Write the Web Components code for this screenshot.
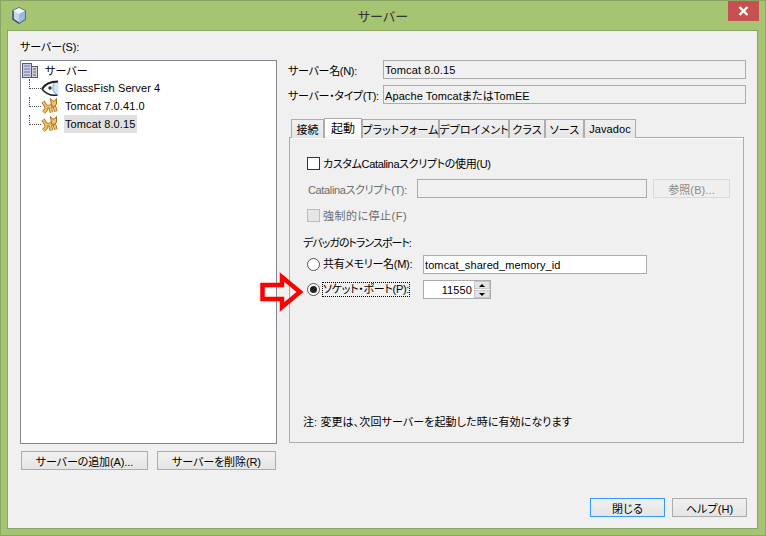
<!DOCTYPE html>
<html lang="ja">
<head>
<meta charset="utf-8">
<title>サーバー</title>
<style>
  html, body { margin: 0; padding: 0; background: #a6c573; }
  body {
    font: 11px "Liberation Sans", "Noto Sans CJK JP", sans-serif; color: #000;
    font-feature-settings: "palt"; letter-spacing: 0.1px;
  }
</style>
</head>
<body>
<server-dialog></server-dialog>

<script>
(function() {
  const catPath = 'M2 3.500L5 8.500L9 8.500L13.500 7M13 7.500L15 13.500M5 8.500L5.500 11L2.500 14.500M9 9L10.500 14.500';
  const ICONS = {
    server: `<svg width="16" height="16" viewBox="0 0 16 16"><rect x="0.5" y="1.5" width="9" height="14" fill="#c9cde6" stroke="#555a6e"/><rect x="9.5" y="4.5" width="6" height="11" fill="#d6d6d6" stroke="#555a6e"/><path d="M2 4h6M2 7h6M2 10h6M2 13h6" stroke="#6b70a8"/><path d="M11 7h3M11 10h3M11 13h3" stroke="#555"/></svg>`,
    fish: `<svg width="18" height="17" viewBox="0 0 18 17"><path d="M13 2.500C10 6 10.500 12 15 15.500C16.500 15.500 17 15 17.500 14.500V2z" fill="#cfe4f5"/><path d="M1 9C4 4 10 1.500 17 1.500" fill="none" stroke="#1c1c1c" stroke-width="1.800"/><path d="M1 9C5 14 11 16 16.500 15" fill="none" stroke="#1c1c1c" stroke-width="1.500"/><circle cx="9" cy="8" r="1.700" fill="#333"/><path d="M13 3C11 7 12 12 15 14" fill="none" stroke="#7fb0dc"/></svg>`,
    cat: `<svg width="17" height="17" viewBox="0 0 17 17"><path d="${catPath}" fill="none" stroke="#a5701f" stroke-width="3.600" stroke-linejoin="round"/><path d="${catPath}" fill="none" stroke="#f2c063" stroke-width="2" stroke-linejoin="round"/><path d="M9.500 .5L11.500 3h2L15.500 .5V6l-2 2.500-3-.5z" fill="#f2c063" stroke="#a5701f"/></svg>`
  };

  // plain gray push button
  class UiButton extends HTMLElement {
    constructor() {
      super();
      this.attachShadow({ mode: 'open' }).innerHTML = `
        <style>
          :host {
            display: flex; align-items: center; justify-content: center;
            box-sizing: border-box; height: 19px;
            border: 1px solid #acacac;
            background: linear-gradient(#f0f0f0, #e5e5e5);
            color: #000;
          }
          :host([focused]) { border-color: #3399ff; }
          :host([disabled]) { border-color: #d9d9d9; background: #efefef; color: #8a8a8a; }
        </style>
        <slot></slot>`;
    }
  }
  customElements.define('ui-button', UiButton);

  class UiField extends HTMLElement {
    constructor() {
      super();
      this.attachShadow({ mode: 'open' }).innerHTML = `
        <style>
          :host {
            display: flex; align-items: center;
            box-sizing: border-box; height: 19px; padding: 0 2px 0 1px;
            border: 1px solid #ababab; background: #f0f0f0; color: #000;
            white-space: nowrap;
          }
          :host([editable]) { background: #fff; }
        </style>
        <slot></slot>`;
    }
  }
  customElements.define('ui-field', UiField);

  class UiCheck extends HTMLElement {
    constructor() {
      super();
      this.attachShadow({ mode: 'open' }).innerHTML = `
        <style>
          :host { display: flex; align-items: center; gap: 3px; height: 14px; white-space: nowrap; }
          .box { width: 11px; height: 11px; border: 1px solid #333; background: #fff; flex: none; }
          :host([disabled]) { color: #6d6d6d; }
          :host([disabled]) .box { border-color: #bcbcbc; background: #e6e6e6; }
        </style>
        <span class="box"></span><slot></slot>`;
    }
  }
  customElements.define('ui-check', UiCheck);

  class UiRadio extends HTMLElement {
    constructor() {
      super();
      this.attachShadow({ mode: 'open' }).innerHTML = `
        <style>
          :host { display: flex; align-items: center; gap: 3px; white-space: nowrap; }
          .dot {
            width: 11px; height: 11px; border: 1px solid #555; border-radius: 50%; background: #fff;
            flex: none; display: flex; align-items: center; justify-content: center;
          }
          .dot i { width: 7px; height: 7px; border-radius: 50%; background: #222; display: none; }
          :host([checked]) .dot i { display: block; }
          .txt { line-height: 13px; }
          :host([focused]) .txt { outline: 1px dotted #000; }
        </style>
        <span class="dot"><i></i></span><span class="txt"><slot></slot></span>`;
    }
  }
  customElements.define('ui-radio', UiRadio);

  class UiSpinner extends HTMLElement {
    constructor() {
      super();
      this.attachShadow({ mode: 'open' }).innerHTML = `
        <style>
          :host {
            display: flex; box-sizing: border-box; height: 19px; width: 68px;
            border: 1px solid #ababab; background: #fff;
          }
          .val { flex: 1; display: flex; align-items: center; justify-content: flex-end; padding-right: 2px; }
          .btns { width: 16px; display: flex; flex-direction: column; gap: 1px; background: #fff; }
          .btns span {
            flex: 1; background: #e3e3e3; display: flex; align-items: center; justify-content: center;
            border: 1px solid #c9c9c9; box-sizing: border-box;
          }
          .up { width: 0; height: 0; border: 3px solid transparent; border-top: 0; border-bottom: 3px solid #000; }
          .dn { width: 0; height: 0; border: 3px solid transparent; border-bottom: 0; border-top: 3px solid #000; }
        </style>
        <span class="val"><slot></slot></span>
        <span class="btns"><span><i class="up"></i></span><span><i class="dn"></i></span></span>`;
    }
  }
  customElements.define('ui-spinner', UiSpinner);

  class TreeItem extends HTMLElement {
    constructor() {
      super();
      const root = this.hasAttribute('root');
      const icon = ICONS[this.getAttribute('icon')] || '';
      this.attachShadow({ mode: 'open' }).innerHTML = `
        <style>
          :host { display: flex; align-items: center; height: 18px; white-space: nowrap; }
          .conn {
            align-self: flex-start; width: 11px; height: 9px; margin-left: 8px; flex: none;
            border-left: 1px dotted #555; border-bottom: 1px dotted #555; box-sizing: content-box;
          }
          .ic { display: flex; flex: none; width: ${root ? 22 : 23}px; margin-left: ${root ? 1 : 0}px; }
          .txt { padding: 0 2px 0 1px; height: 18px; display: flex; align-items: center; }
          :host([selected]) .txt { background: #e0e0e0; }
        </style>
        ${root ? '' : '<span class="conn"></span>'}
        <span class="ic">${icon}</span><span class="txt"><slot></slot></span>`;
    }
  }
  customElements.define('tree-item', TreeItem);

  class TabStrip extends HTMLElement {
    constructor() {
      super();
      const names = ['接続', '起動', 'プラットフォーム', 'デプロイメント', 'クラス', 'ソース', 'Javadoc'];
      const widths = [33, 38, 77, 70, 36, 39, 52];
      this.attachShadow({ mode: 'open' }).innerHTML = `
        <style>
          :host { display: flex; align-items: flex-end; height: 20px; padding-left: 3px; position: relative; z-index: 1; margin-bottom: -1px; }
          .tab {
            box-sizing: border-box; height: 19px;
            display: flex; align-items: center; justify-content: center; white-space: nowrap;
            border: 1px solid #acacac; border-bottom: 0;
            background: linear-gradient(#f0f0f0, #e6e6e6);
          }
          .tab.on {
            height: 20px; background: linear-gradient(#fff, #fff 80%, #f0f0f0);
            padding-bottom: 2px; font-size: 12px;
          }
        </style>
        ${names.map((n, i) => `<span class="tab${i === 1 ? ' on' : ''}" style="width:${widths[i]}px">${n}</span>`).join('')}`;
    }
  }
  customElements.define('tab-strip', TabStrip);

  class ServerDialog extends HTMLElement {
    constructor() {
      super();
      this.attachShadow({ mode: 'open' }).innerHTML = `
        <style>
          :host {
            display: flex; flex-direction: column; box-sizing: border-box;
            width: 766px; height: 536px; position: relative; overflow: hidden;
            border: 1px solid #8aa565; background: #a6c573;
          }
          .title { height: 29px; display: flex; flex: none; position: relative; }
          .title .logo { margin: 6px 0 0 10px; }
          .title .cap { position: absolute; left: 0; right: 0; top: 5px; text-align: center; font-size: 13px; color: #333; }
          .title .close {
            position: absolute; right: 6px; top: 0; width: 31px; height: 20px; background: #c75050;
            display: flex; align-items: center; justify-content: center;
          }
          .body {
            margin: 0 7px 6px 6px; flex: 1; min-height: 0;
            border: 1px solid #8aa565; background: #f0f0f0;
            display: flex; flex-direction: column;
          }
          .main { display: flex; box-sizing: border-box; height: 440px; padding: 8px 0 0 12px; gap: 11px; }
          .left { width: 257px; display: flex; flex-direction: column; }
          .left .cap { height: 16px; line-height: 16px; margin-bottom: 5px; letter-spacing: -0.1px; }
          .tree {
            box-sizing: border-box; height: 384px; border: 1px solid #828790; background: #fff;
          }
          .left .btns { display: flex; padding: 7px 1px 0 1px; gap: 9px; letter-spacing: -0.1px; }
          .right { width: 458px; display: flex; flex-direction: column; padding-top: 21px; }
          .row { display: flex; align-items: center; white-space: nowrap; }
          .row .lab { width: 95px; flex: none; letter-spacing: -0.3px; }
          .row ui-field { flex: 1; min-width: 0; }
          .row + .row { margin-top: 6px; }
          tab-strip { margin-top: 14px; }
          .pane {
            box-sizing: border-box; width: 455px; height: 306px; margin-left: 1px; flex: none;
            border: 1px solid #acacac; background: #f0f0f0;
            box-shadow: inset 0 1px 0 #fff;
            padding: 18px 13px 12px 17px;
            display: flex; flex-direction: column;
          }
          .use { letter-spacing: -0.35px; }
          .cat { display: flex; align-items: center; margin-top: 9px; color: #6d6d6d; white-space: nowrap; }
          .cat .lab { width: 110px; flex: none; padding-left: 1px; box-sizing: border-box; letter-spacing: -0.35px; }
          .cat ui-field { width: 230px; }
          .cat ui-button { width: 77px; margin-left: 6px; }
          .force { margin-top: 10px; letter-spacing: 0.5px; }
          .debug { margin: 13px 0 0 -4px; height: 16px; line-height: 16px; letter-spacing: -1px; }
          .rad { display: flex; align-items: center; margin-top: 4px; }
          .rad ui-radio { width: 116px; flex: none; letter-spacing: -0.3px; }
          .rad ui-field { width: 224px; }
          .rad + .rad { margin-top: 6px; }
          .note { margin: auto 0 0 -4px; height: 16px; line-height: 16px; white-space: nowrap; }
          .foot { display: flex; justify-content: flex-end; gap: 7px; padding: 27px 10px 0 0; }
          .foot ui-button { width: 75px; }
          .arrow { position: absolute; left: 258px; top: 270px; }
        </style>
        <div class="title">
          <span class="logo"><svg width="16" height="17" viewBox="0 0 18 20"><path d="M9 1l7 3.500v10L9 19l-7-4.500v-10z" fill="#c5d8ee" stroke="#35506e" stroke-width="1.800" stroke-linejoin="round"/><path d="M9 8l7-3.500v10L9 19z" fill="#9dbcdc"/><path d="M9 8L2 4.500 9 1l7 3.500z" fill="#eef4fb"/></svg></span>
          <span class="cap">サーバー</span>
          <span class="close"><svg width="11" height="10" viewBox="0 0 11 10"><path d="M1.500 1l8 8M9.500 1l-8 8" stroke="#fff" stroke-width="2.400"/></svg></span>
        </div>
        <div class="body">
          <div class="main">
            <div class="left">
              <div class="cap">サーバー(S):</div>
              <div class="tree">
                <tree-item root icon="server">サーバー</tree-item>
                <tree-item icon="fish">GlassFish Server 4</tree-item>
                <tree-item icon="cat">Tomcat 7.0.41.0</tree-item>
                <tree-item icon="cat" selected>Tomcat 8.0.15</tree-item>
              </div>
              <div class="btns">
                <ui-button style="width:127px">サーバーの追加(A)...</ui-button>
                <ui-button style="width:119px">サーバーを削除(R)</ui-button>
              </div>
            </div>
            <div class="right">
              <div class="row"><span class="lab">サーバー名(N):</span><ui-field>Tomcat 8.0.15</ui-field></div>
              <div class="row"><span class="lab">サーバー・タイプ(T):</span><ui-field>Apache TomcatまたはTomEE</ui-field></div>
              <tab-strip></tab-strip>
              <div class="pane">
                <ui-check class="use">カスタムCatalinaスクリプトの使用(U)</ui-check>
                <div class="cat"><span class="lab">Catalinaスクリプト(T):</span><ui-field></ui-field><ui-button disabled>参照(B)...</ui-button></div>
                <ui-check class="force" disabled>強制的に停止(F)</ui-check>
                <div class="debug">デバッガのトランスポート:</div>
                <div class="rad"><ui-radio>共有メモリー名(M):</ui-radio><ui-field editable>tomcat_shared_memory_id</ui-field></div>
                <div class="rad"><ui-radio checked focused>ソケット・ポート(P):</ui-radio><ui-spinner>11550</ui-spinner></div>
                <div class="note">注: 変更は、次回サーバーを起動した時に有効になります</div>
              </div>
            </div>
          </div>
          <div class="foot">
            <ui-button focused>閉じる</ui-button>
            <ui-button>ヘルプ(H)</ui-button>
          </div>
        </div>
        <svg class="arrow" width="46" height="41" viewBox="0 0 46 41"><path d="M3.500 14H23V6L41 21 23 36V28H3.500z" fill="none" stroke="#f00" stroke-width="4.500"/></svg>`;
    }
  }
  customElements.define('server-dialog', ServerDialog);
})();
</script>
</body>
</html>
